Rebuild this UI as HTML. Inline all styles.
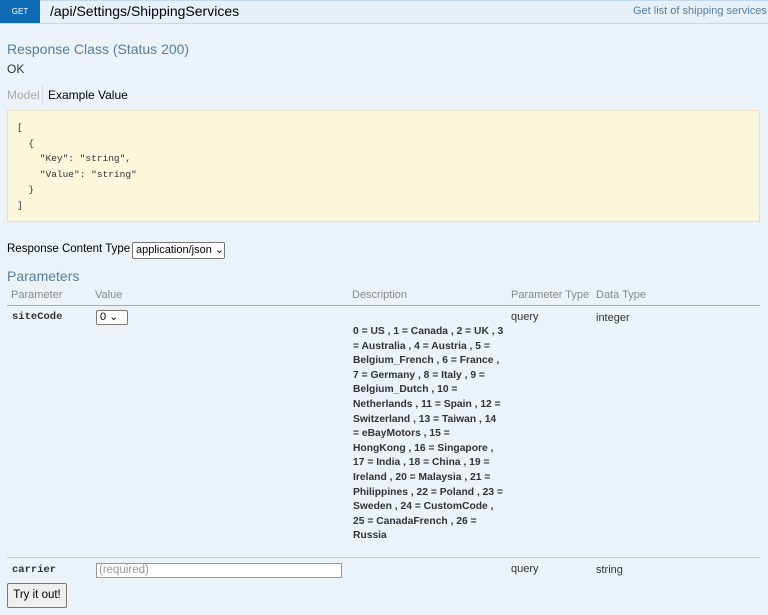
<!DOCTYPE html>
<html><head><meta charset="utf-8"><style>
*{margin:0;padding:0;box-sizing:border-box}
body{width:768px;height:615px;background:#ebf3f9;font-family:"Liberation Sans",sans-serif;font-size:12px;color:#000;position:relative;overflow:hidden}
.a{position:absolute;white-space:nowrap}
.hdr{position:absolute;left:0;top:0;width:768px;height:24px;background:#e7f0f7;border-bottom:1px solid #c3d9ec;border-top:1px solid #c3d9ec}
.get{position:absolute;left:0;top:0;width:40px;height:23px;background:#0f6ab4;color:#fff;font-size:8px;text-align:center;line-height:23px}
.blue{color:#547f9f}
.lbl{color:#888;font-size:11px}
pre{position:absolute;left:7px;top:110px;width:753px;height:112px;background:#fcf6db;border:1px solid #e5e0c6;font-family:"Liberation Mono",monospace;font-size:9.5px;line-height:15.6px;padding:9px 9px;color:#333}
.sel{position:absolute;border:1px solid #767676;border-radius:2px;background:#fff;font-size:11px;padding-left:3px;line-height:15px;white-space:nowrap;overflow:hidden}
.desc{position:absolute;left:353px;top:325px;font-weight:bold;font-size:10.3px;line-height:14.6px;color:#333;white-space:nowrap}
.mono{font-family:"Liberation Mono",monospace;font-weight:bold;font-size:10.5px;color:#333}
</style></head><body>
<div class="hdr"></div>
<div class="get">GET</div>
<div class="a" style="left:50px;top:3px;font-size:14px;color:#000">/api/Settings/ShippingServices</div>
<div class="a" style="left:633px;top:5px;font-size:11px;color:#547f9f">Get list of shipping services</div>
<div class="a blue" style="left:7px;top:41px;font-size:14px">Response Class (Status 200)</div>
<div class="a" style="left:7px;top:62px;font-size:12px;color:#333">OK</div>
<div class="a" style="left:7px;top:88px;font-size:12px;color:#aaa">Model</div>
<div style="position:absolute;left:42px;top:85px;width:1px;height:20px;background:#ddd"></div>
<div class="a" style="left:48px;top:88px;font-size:12px;color:#000">Example Value</div>
<pre>[
  {
    "Key": "string",
    "Value": "string"
  }
]</pre>
<div class="a" style="left:7px;top:243px;font-size:11.5px;color:#000">Response Content Type</div>
<div class="sel" style="left:132px;top:242px;width:93px;height:17px">application/json ⌄</div>
<div class="a blue" style="left:7px;top:268px;font-size:14px">Parameters</div>
<div class="a lbl" style="left:11px;top:289px">Parameter</div>
<div class="a lbl" style="left:95px;top:289px">Value</div>
<div class="a lbl" style="left:352px;top:289px">Description</div>
<div class="a lbl" style="left:511px;top:289px">Parameter Type</div>
<div class="a lbl" style="left:596px;top:289px">Data Type</div>
<div style="position:absolute;left:7px;top:305px;width:753px;height:1px;background:#aaa"></div>
<div class="a mono" style="left:12px;top:311px">siteCode</div>
<div class="sel" style="left:96px;top:310px;width:32px;height:15px;line-height:13px">0 ⌄</div>
<div class="a" style="left:511px;top:311px;font-size:11px;color:#333">query</div>
<div class="a" style="left:596px;top:312px;font-size:11px;color:#333">integer</div>
<div class="desc">0 = US , 1 = Canada , 2 = UK , 3<br>= Australia , 4 = Austria , 5 =<br>Belgium_French , 6 = France ,<br>7 = Germany , 8 = Italy , 9 =<br>Belgium_Dutch , 10 =<br>Netherlands , 11 = Spain , 12 =<br>Switzerland , 13 = Taiwan , 14<br>= eBayMotors , 15 =<br>HongKong , 16 = Singapore ,<br>17 = India , 18 = China , 19 =<br>Ireland , 20 = Malaysia , 21 =<br>Philippines , 22 = Poland , 23 =<br>Sweden , 24 = CustomCode ,<br>25 = CanadaFrench , 26 =<br>Russia</div>
<div style="position:absolute;left:7px;top:557px;width:753px;height:1px;background:#ccc"></div>
<div class="a mono" style="left:12px;top:564px">carrier</div>
<div style="position:absolute;left:96px;top:563px;width:246px;height:15px;background:#fff;border:1px solid #999;font-size:11.5px;color:#999;padding-left:2px;line-height:13px">(required)</div>
<div class="a" style="left:511px;top:563px;font-size:11px;color:#333">query</div>
<div class="a" style="left:596px;top:564px;font-size:11px;color:#333">string</div>
<div style="position:absolute;left:7px;top:583px;width:60px;height:25px;background:#efefef;border:1px solid #777;border-radius:2px;font-size:11.5px;text-align:center;line-height:23px">Try it out!</div>
</body></html>
